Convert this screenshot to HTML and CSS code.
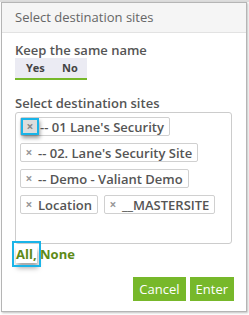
FILE: index.html
```html
<!DOCTYPE html>
<html>
<head>
    <title>Select destination sites</title>
    <meta name="viewport" content="width=device-width, initial-scale=1.0">
    <link rel="stylesheet" href="styles.css">
</head>
<body>
    <div class="page-strip"></div>
    <div class="dialog">
        <div class="dialog-head">Select destination sites</div>
        <div class="dialog-body">
            <div class="label">Keep the same name</div>
            <div class="toggle">
                <span class="opt">Yes</span>
                <span class="opt">No</span>
            </div>

            <div class="label sites-label">Select destination sites</div>
            <div class="picker">
                <span class="tag"><span class="rm focus">&times;</span>-- 01 Lane's Security</span>
                <span class="tag"><span class="rm">&times;</span>-- 02. Lane's Security Site</span>
                <span class="tag"><span class="rm">&times;</span>-- Demo - Valiant Demo</span>
                <span class="tag"><span class="rm">&times;</span>Location</span>
                <span class="tag"><span class="rm">&times;</span>__MASTERSITE</span>
            </div>
            <div class="links"><a class="focus-link">All,</a> <a>None</a></div>
        </div>
        <div class="dialog-foot">
            <button class="btn">Cancel</button>
            <button class="btn">Enter</button>
        </div>
    </div>
</body>
</html>
```

FILE: styles.css
```css
* {
    margin: 0;
    padding: 0;
    box-sizing: border-box;
}

body {
    background: #fff;
    font-family: "Open Sans", "Noto Sans", sans-serif;
    color: #555;
    width: 249px;
    height: 315px;
    overflow: hidden;
}

.page-strip {
    height: 2px;
    background: #ddd;
}

.dialog {
    margin-left: 1px;
    width: 246px;
    height: 310px;
    border: 1px solid #b5b5b5;
    background: #fff;
    box-shadow: 1px 1px 2px rgba(0, 0, 0, 0.25);
    display: flex;
    flex-direction: column;
}

.dialog-head {
    height: 30px;
    background: #f5f5f5;
    border-bottom: 1px solid #e2e2e2;
    padding: 5px 0 0 13px;
    font-size: 13px;
    color: #666;
}

.dialog-body {
    padding: 9px 13px 0 13px;
}

.label {
    font-size: 13px;
    font-weight: 600;
    color: #555;
    line-height: 16px;
}

.toggle {
    display: flex;
    width: 72px;
    height: 22px;
    background: #ebebf3;
    border-bottom: 2px solid #76b82a;
}

.opt {
    font-size: 11px;
    font-weight: 700;
    color: #444;
    line-height: 20px;
    padding-left: 11px;
    width: 36px;
}

.sites-label {
    margin-top: 15px;
}

.picker {
    margin-top: 1px;
    width: 217px;
    height: 132px;
    border: 1px solid #ccc;
    border-radius: 3px;
    padding: 4px 4px;
    display: flex;
    flex-wrap: wrap;
    align-content: flex-start;
    gap: 7px 6px;
}

.tag {
    display: flex;
    align-items: center;
    height: 19px;
    border: 1px solid #d0d0d0;
    border-radius: 2px;
    padding: 0 5px 0 3px;
    font-size: 13px;
    font-weight: 600;
    color: #555;
    white-space: nowrap;
}

.rm {
    font-size: 12px;
    color: #999;
    font-weight: 700;
    width: 10px;
    margin-right: 4px;
    text-align: center;
}

.rm.focus {
    width: 18px;
    height: 17px;
    margin: 0 1px 0 -3px;
    line-height: 13px;
    border: 2px solid #1ab4e8;
    background: #ddd;
    color: #888;
    box-shadow: 1px 3px 4px rgba(0, 0, 0, 0.4);
}

.links {
    margin-top: 1px;
    padding-left: 1px;
    font-size: 13px;
    font-weight: 700;
    color: #5e8a17;
    line-height: 18px;
}

.focus-link {
    outline: 2px solid #1ab4e8;
    outline-offset: 2px;
    box-shadow: 1px 5px 5px rgba(0, 0, 0, 0.35);
}

.dialog-foot {
    margin-top: auto;
    display: flex;
    justify-content: flex-end;
    gap: 4px;
    padding: 0 12px 10px 0;
}

.btn {
    background: #77b82a;
    color: #fff;
    border: none;
    font-family: "Open Sans", "Noto Sans", sans-serif;
    font-size: 13px;
    height: 24px;
    padding: 0 6px;
}
```
